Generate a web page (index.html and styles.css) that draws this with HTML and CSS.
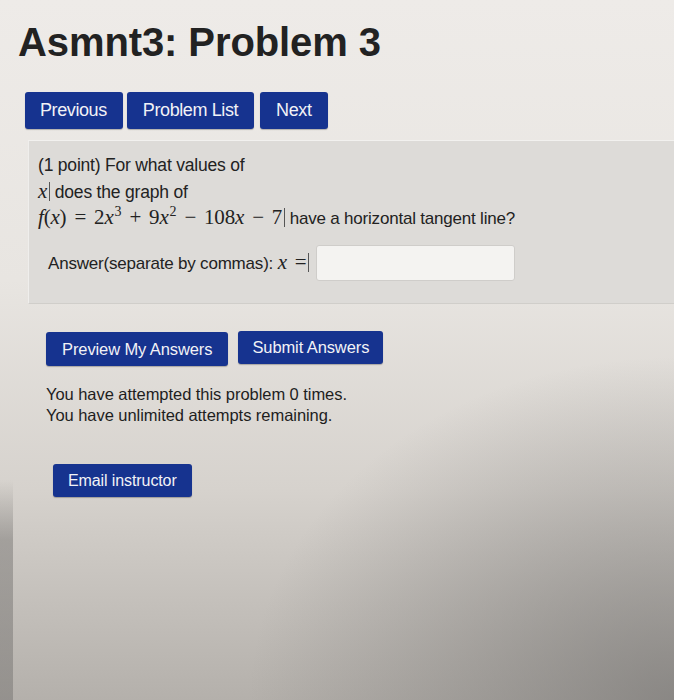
FILE: index.html
```html
<!DOCTYPE html>
<html>
<head>
<meta charset="utf-8">
<link rel="stylesheet" href="styles.css">
</head>
<body>
<div class="page">
  <h1 class="title">Asmnt3: Problem 3</h1>
  <div class="nav">
    <a class="btn nav-btn">Previous</a>
    <a class="btn nav-btn">Problem List</a>
    <a class="btn nav-btn">Next</a>
  </div>
  <div class="problem">
    <div class="ptext">
      <div>(1 point) For what values of</div>
      <div><span class="m">x</span><span class="cur"></span> does the graph of</div>
      <div><span class="m">f</span><span class="mr">(</span><span class="m">x</span><span class="mr">) = 2</span><span class="m">x</span><sup class="mr">3</sup><span class="mr"> + 9</span><span class="m">x</span><sup class="mr">2</sup><span class="mr"> &minus; 108</span><span class="m">x</span><span class="mr"> &minus; 7</span><span class="cur"></span> have a horizontal tangent line?</div>
    </div>
    <div class="answer">
      <span>Answer(separate by commas): <span class="m">x</span><span class="mr"> =</span><span class="cur"></span></span>
      <span class="input"></span>
    </div>
  </div>
  <div class="actions">
    <a class="btn act-btn">Preview My Answers</a>
    <a class="btn act-btn">Submit Answers</a>
  </div>
  <div class="attempts">
    <div>You have attempted this problem 0 times.</div>
    <div>You have unlimited attempts remaining.</div>
  </div>
  <div class="email">
    <a class="btn email-btn">Email instructor</a>
  </div>
</div>
</body>
</html>
```
FILE: styles.css
```css
html, body {
  margin: 0;
  padding: 0;
  height: 700px;
  overflow: hidden;
}
body {
  font-family: "Liberation Sans", Arial, sans-serif;
  color: #1e1e1e;
  background:
    linear-gradient(180deg, rgba(110,108,106,0) 0px, rgba(110,108,106,0.45) 60px) 0 480px / 13px 220px no-repeat,
    radial-gradient(ellipse 90% 70% at 100% 100%, rgba(120,118,116,0.7) 0%, rgba(120,118,116,0) 70%),
    linear-gradient(180deg, #eeebe8 0%, #e8e5e1 40%, #d6d2cd 70%, #b4b0ab 100%);
}
.page {
  padding: 0 0 0 18px;
}
.title {
  margin: 0;
  padding-top: 19px;
  font-size: 40px;
  line-height: 46px;
  font-weight: bold;
  color: #222;
  letter-spacing: -0.1px;
}
.nav {
  display: flex;
  gap: 5px;
  margin: 27px 0 0 7px;
}
.btn {
  display: inline-block;
  background: #16338f;
  color: #f2f2f6;
  border-radius: 3px;
  box-shadow: 0 1px 1px rgba(0,0,0,0.25);
}
.nav-btn {
  font-size: 18px;
  line-height: 37px;
  padding: 0 15px;
  letter-spacing: -0.4px;
}
.nav-btn:nth-child(1) { padding: 0 16px 0 15px; }
.nav-btn:nth-child(2) { padding: 0 16px; margin-left: -1px; }
.nav-btn:nth-child(3) { padding: 0 16px; margin-left: 1px; }
.problem {
  margin: 11px 0 0 10px;
  background: #dddbd8;
  border-top: 1px solid #f2f1ef;
  border-left: 1px solid #efeeec;
  border-bottom: 1px solid #d0ceca;
  padding: 12px 0 22px 9px;
  height: 128px;
  font-size: 17.5px;
  color: #222;
}
.ptext div {
  line-height: 25.5px;
  letter-spacing: -0.2px;
}
.ptext div:nth-child(3) { font-size: 17px; }
.m {
  font-family: "Liberation Serif", "Times New Roman", serif;
  font-style: italic;
  font-size: 21px;
}
.mr {
  font-family: "Liberation Serif", "Times New Roman", serif;
  font-size: 21px;
  word-spacing: 3px;
}
sup.mr {
  font-size: 14px;
  vertical-align: 8px;
  line-height: 0;
  margin-left: 1px;
}
.cur {
  display: inline-block;
  width: 1px;
  height: 19px;
  background: #555;
  vertical-align: -3px;
  margin-left: 2px;
}
.answer {
  display: flex;
  align-items: center;
  margin: 13px 0 0 10px;
  letter-spacing: -0.2px;
  font-size: 17px;
}
.input {
  display: inline-block;
  width: 197px;
  height: 34px;
  margin-left: 7px;
  background: #f4f3f1;
  border: 1px solid #cfcdca;
  border-radius: 3px;
}
.actions {
  display: flex;
  gap: 10px;
  margin: 28px 0 0 28px;
  align-items: flex-start;
}
.act-btn {
  font-size: 16.5px;
  line-height: 34px;
  padding: 0 16px;
  letter-spacing: -0.1px;
}
.act-btn:nth-child(2) { margin-top: -1px; line-height: 33px; padding: 0 14px; }
.attempts {
  margin: 18px 0 0 28px;
  font-size: 16.5px;
  line-height: 21px;
  color: #1e1e1e;
  letter-spacing: -0.05px;
}
.email {
  margin: 38px 0 0 35px;
}
.email-btn {
  font-size: 16px;
  line-height: 33px;
  padding: 0 15px;
  letter-spacing: -0.1px;
}
```
